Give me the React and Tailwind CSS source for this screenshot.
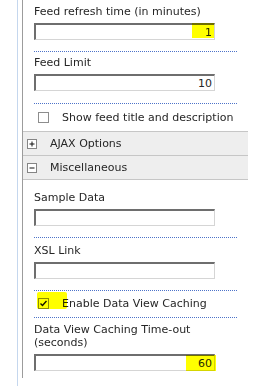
import React from 'react';

const Label = ({ children, className = '' }) => (
  <div className={`leading-[13px] ${className}`}>{children}</div>
);

const Dots = ({ className = '' }) => (
  <div className={`w-[203px] border-t border-dotted border-[#4d73c9] ${className}`} />
);

const TextBox = ({ value, className = '', children }) => (
  <div
    className={`relative w-[181px] h-[17px] flex items-center justify-end pr-[2px] bg-white border-t-2 border-l-2 border-r border-b border-t-[#6e6e6e] border-l-[#6e6e6e] border-r-[#d5d5d5] border-b-[#d5d5d5] ${className}`}
  >
    <span className="leading-none">{value}</span>
    {children}
  </div>
);

const Box = ({ checked }) => (
  <div className="w-[11px] h-[11px] border border-[#8d8d8d] bg-white flex items-center justify-center">
    {checked && (
      <svg width="7" height="7" viewBox="0 0 7 7">
        <path d="M0.5 3.5 L2.5 5.5 L6.5 1" fill="none" stroke="#111" strokeWidth="1.4" />
      </svg>
    )}
  </div>
);

const Toggle = ({ open }) => (
  <svg width="10" height="10" viewBox="0 0 10 10" className="shrink-0">
    <rect x="0.5" y="0.5" width="9" height="9" fill="#fff" stroke="#858585" />
    <path d="M2.5 5 H7.5" stroke="#111" strokeWidth="1" />
    {!open && <path d="M5 2.5 V7.5" stroke="#111" strokeWidth="1" />}
  </svg>
);

const SectionRow = ({ open, title }) => (
  <div className="h-[24px] flex items-center pl-[4px] gap-[13px] bg-[#eeeeee] border-t border-[#c6c6c6]">
    <Toggle open={open} />
    <span className="leading-[13px]">{title}</span>
  </div>
);

export default function App() {
  return (
    <div className="w-[272px] h-[386px] bg-white flex overflow-hidden font-['DejaVu_Sans',Verdana,sans-serif] text-[11px] text-[#262626]">
      <div className="w-[17px] shrink-0" />
      <div className="w-px shrink-0 bg-[#c5d7ee]" />
      <div className="w-[4px] shrink-0" />
      <div className="w-[226px] h-[378px] shrink-0 border-l border-[#9c9c9c]">
        <div className="pl-[11px] pt-[5px]">
          <Label>Feed refresh time (in minutes)</Label>
          <TextBox value="1" className="mt-[5px]">
            <span className="absolute top-[-2px] right-0 w-[22px] h-[15px] bg-[#ffff00] mix-blend-multiply pointer-events-none" />
          </TextBox>
          <Dots className="mt-[11px]" />
          <Label className="mt-[4px]">Feed Limit</Label>
          <TextBox value="10" className="mt-[5px]" />
          <Dots className="mt-[12px]" />
          <div className="mt-[7px] h-[13px] flex items-center pl-[4px] gap-[13px]">
            <Box />
            <span className="leading-[13px]">Show feed title and description</span>
          </div>
        </div>

        <div className="mt-[7px] border-b border-[#c6c6c6]">
          <SectionRow title="AJAX Options" />
          <SectionRow open title="Miscellaneous" />
        </div>

        <div className="pl-[11px]">
          <Label className="mt-[11px]">Sample Data</Label>
          <TextBox value="" className="mt-[5px]" />
          <Dots className="mt-[11px]" />
          <Label className="mt-[6px]">XSL Link</Label>
          <TextBox value="" className="mt-[5px]" />
          <Dots className="mt-[11px]" />
          <div className="relative mt-[6px] h-[13px] flex items-center pl-[4px] gap-[13px]">
            <Box checked />
            <span className="leading-[13px]">Enable Data View Caching</span>
            <span className="absolute left-[3px] top-[-5px] w-[30px] h-[17px] rounded-[2px] bg-[#ffff00] mix-blend-multiply pointer-events-none" />
          </div>
          <Dots className="mt-[7px]" />
          <Label className="mt-[5px]">
            Data View Caching Time-out
            <br />
            (seconds)
          </Label>
          <TextBox value="60" className="mt-[5px]">
            <span className="absolute top-[-1px] right-[-2px] w-[30px] h-[16px] bg-[#ffff00] mix-blend-multiply pointer-events-none" />
          </TextBox>
        </div>
      </div>
    </div>
  );
}
